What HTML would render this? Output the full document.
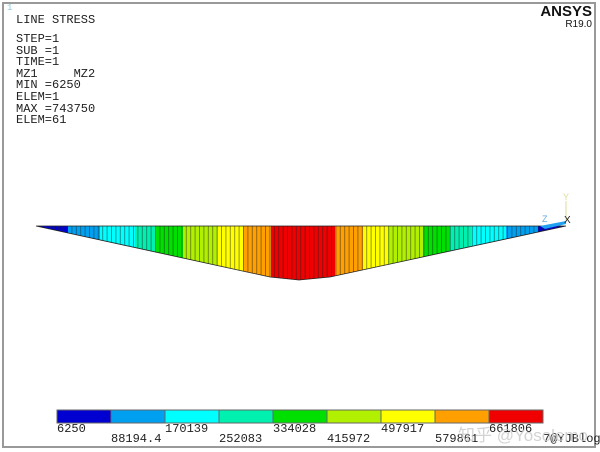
<!DOCTYPE html><html><head><style>
body{margin:0;width:600px;height:452px;background:#fff;overflow:hidden;position:relative;font-family:"Liberation Mono",monospace;}
.fr{position:absolute;left:2px;top:2px;width:594px;height:446px;border:2px solid #999;box-sizing:border-box;}
.t{position:absolute;font-size:12px;color:#222;white-space:pre;line-height:11.6px;}
</style></head><body>
<div class="fr"></div>
<div class="t" style="left:7px;top:3px;color:#8cd;font-size:9px">1</div>
<div class="t" style="left:16px;top:15px">LINE STRESS</div>
<div class="t" style="left:16px;top:34px">STEP=1
SUB =1
TIME=1
MZ1     MZ2
MIN =6250
ELEM=1
MAX =743750
ELEM=61</div>
<div style="position:absolute;right:8px;top:3px;font:bold 15px 'Liberation Sans Narrow','Liberation Sans',sans-serif;color:#111">ANSYS</div>
<div style="position:absolute;right:8px;top:19px;font:10px 'Liberation Sans',sans-serif;color:#111">R19.0</div>
<svg width="600" height="452" style="position:absolute;left:0;top:0">
<defs>
<pattern id="p" width="4.4" height="100" patternUnits="userSpaceOnUse" x="1"><line x1="0.5" y1="0" x2="0.5" y2="100" stroke="#222" stroke-width="0.8" opacity="0.6"/></pattern>
<clipPath id="c"><polygon points="36,226 270,277 299,280 330,277 566,226"/></clipPath>
</defs>
<g clip-path="url(#c)">
<rect x="30" y="220" width="38" height="70" fill="#0000d0"/>
<rect x="68" y="220" width="32" height="70" fill="#00a0f0"/>
<rect x="100" y="220" width="35" height="70" fill="#00ffff"/>
<rect x="135" y="220" width="21" height="70" fill="#00f0b0"/>
<rect x="156" y="220" width="27" height="70" fill="#00e000"/>
<rect x="183" y="220" width="35" height="70" fill="#b0f000"/>
<rect x="218" y="220" width="25" height="70" fill="#ffff00"/>
<rect x="243" y="220" width="28" height="70" fill="#ffa000"/>
<rect x="271" y="220" width="64" height="70" fill="#f00000"/>
<rect x="335" y="220" width="28" height="70" fill="#ffa000"/>
<rect x="363" y="220" width="25" height="70" fill="#ffff00"/>
<rect x="388" y="220" width="35" height="70" fill="#b0f000"/>
<rect x="423" y="220" width="27" height="70" fill="#00e000"/>
<rect x="450" y="220" width="21" height="70" fill="#00f0b0"/>
<rect x="471" y="220" width="35" height="70" fill="#00ffff"/>
<rect x="506" y="220" width="32" height="70" fill="#00a0f0"/>
<rect x="538" y="220" width="30" height="70" fill="#0000d0"/>
<rect x="30" y="220" width="540" height="70" fill="url(#p)"/>
</g>
<polygon points="36,226 270,277 299,280 330,277 566,226" fill="none" stroke="#222" stroke-width="0.8"/>
<polygon points="540,226 566,221 566,224 545,229" fill="#20a0f0"/>
<line x1="566" y1="201" x2="566" y2="222" stroke="#dd9" stroke-width="1"/>
<text x="563" y="200" font-size="9" fill="#dd9" font-family="Liberation Sans">Y</text>
<text x="542" y="222" font-size="9" fill="#6ad" font-family="Liberation Sans">Z</text>
<text x="564" y="223" font-size="10" fill="#222" font-family="Liberation Sans">X</text>
<g stroke="#666" stroke-width="1">
<rect x="57" y="410" width="54" height="13" fill="#0000d0"/>
<rect x="111" y="410" width="54" height="13" fill="#00a0f0"/>
<rect x="165" y="410" width="54" height="13" fill="#00ffff"/>
<rect x="219" y="410" width="54" height="13" fill="#00f0b0"/>
<rect x="273" y="410" width="54" height="13" fill="#00e000"/>
<rect x="327" y="410" width="54" height="13" fill="#b0f000"/>
<rect x="381" y="410" width="54" height="13" fill="#ffff00"/>
<rect x="435" y="410" width="54" height="13" fill="#ffa000"/>
<rect x="489" y="410" width="54" height="13" fill="#f00000"/>
</g>
</svg>
<div class="t" style="left:57px;top:424px">6250</div>
<div class="t" style="left:165px;top:424px">170139</div>
<div class="t" style="left:273px;top:424px">334028</div>
<div class="t" style="left:381px;top:424px">497917</div>
<div class="t" style="left:489px;top:424px">661806</div>
<div class="t" style="left:111px;top:434px">88194.4</div>
<div class="t" style="left:219px;top:434px">252083</div>
<div class="t" style="left:327px;top:434px">415972</div>
<div class="t" style="left:435px;top:434px">579861</div>
<div class="t" style="left:543px;top:434px">7@YJBlog</div>
<div style="position:absolute;left:458px;top:421px;font:17px 'Liberation Sans','Noto Sans CJK SC',sans-serif;color:rgba(200,200,200,0.8)">知乎 @Yosolemo</div>
</body></html>
